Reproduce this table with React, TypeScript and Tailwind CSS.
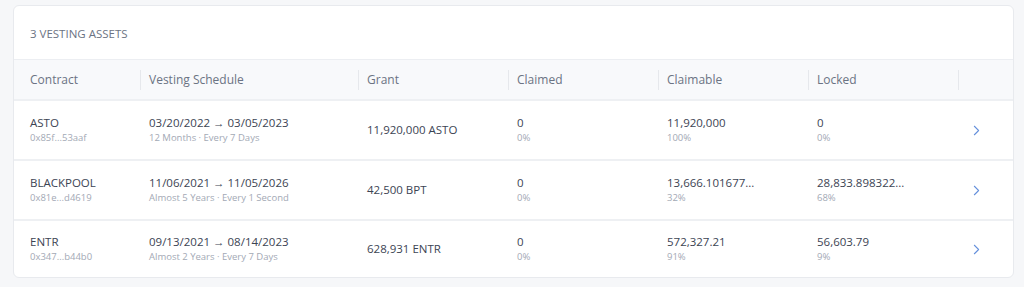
import React from "react";
import { ChevronRight } from "lucide-react";

interface Asset {
  name: string;
  address: string;
  start: string;
  end: string;
  schedule: string;
  grant: string;
  claimed: string;
  claimedPct: string;
  claimable: string;
  claimablePct: string;
  locked: string;
  lockedPct: string;
}

const assets: Asset[] = [
  {
    name: "ASTO",
    address: "0x85f...53aaf",
    start: "03/20/2022",
    end: "03/05/2023",
    schedule: "12 Months · Every 7 Days",
    grant: "11,920,000 ASTO",
    claimed: "0",
    claimedPct: "0%",
    claimable: "11,920,000",
    claimablePct: "100%",
    locked: "0",
    lockedPct: "0%",
  },
  {
    name: "BLACKPOOL",
    address: "0x81e...d4619",
    start: "11/06/2021",
    end: "11/05/2026",
    schedule: "Almost 5 Years · Every 1 Second",
    grant: "42,500 BPT",
    claimed: "0",
    claimedPct: "0%",
    claimable: "13,666.101677...",
    claimablePct: "32%",
    locked: "28,833.898322...",
    lockedPct: "68%",
  },
  {
    name: "ENTR",
    address: "0x347...b44b0",
    start: "09/13/2021",
    end: "08/14/2023",
    schedule: "Almost 2 Years · Every 7 Days",
    grant: "628,931 ENTR",
    claimed: "0",
    claimedPct: "0%",
    claimable: "572,327.21",
    claimablePct: "91%",
    locked: "56,603.79",
    lockedPct: "9%",
  },
];

const columns = [
  { label: "Contract", width: "w-[126px]" },
  { label: "Vesting Schedule", width: "w-[218px]" },
  { label: "Grant", width: "w-[150px]" },
  { label: "Claimed", width: "w-[150px]" },
  { label: "Claimable", width: "w-[150px]" },
  { label: "Locked", width: "w-[150px]" },
  { label: "", width: "w-[57px]" },
];

const Stacked = ({ top, bottom }: { top: string; bottom: string }) => (
  <div className="flex flex-col">
    <span className="text-[11.5px] leading-4 text-[#3c4453]">{top}</span>
    <span className="text-[9.5px] leading-[14px] text-[#a3a9b5]">{bottom}</span>
  </div>
);

const App = () => {
  return (
    <div
      className="min-h-[287px] bg-[#f6f7f9] pl-[13px] pr-[10px] pt-[5px]"
      style={{ fontFamily: "'Open Sans', 'Noto Sans', sans-serif" }}
    >
      <div className="overflow-hidden rounded-md border border-[#e8eaee] bg-white">
        {/* Card header */}
        <div className="flex h-[54px] items-center border-b border-[#eceef2] pl-[16px] pt-[2px]">
          <h2 className="text-[11.5px] uppercase text-[#6b7383]">3 Vesting Assets</h2>
        </div>

        <table className="w-full table-fixed border-collapse">
          <thead>
            <tr className="h-[40px] bg-[#f8f9fb]">
              {columns.map((col, i) => (
                <th key={i} className={`${col.width} p-0 text-left font-normal`}>
                  <div className={`flex h-[20px] items-center ${i === 0 ? "pl-[16px]" : ""}`}>
                    {i > 0 && <div className="h-[20px] w-px bg-[#e6e8ec]" />}
                    <span className={`text-[12px] leading-[20px] text-[#6b7383] ${i > 0 ? "ml-[8px]" : ""}`}>
                      {col.label}
                    </span>
                  </div>
                </th>
              ))}
            </tr>
          </thead>
          <tbody>
            {assets.map((a, i) => (
              <tr
                key={a.name}
                className={`border-t-2 border-[#eef0f3] ${i === assets.length - 1 ? "h-[57px]" : "h-[60px]"}`}
              >
                <td className="pl-[16px]">
                  <Stacked top={a.name} bottom={a.address} />
                </td>
                <td className="pl-[9px]">
                  <Stacked top={`${a.start} → ${a.end}`} bottom={a.schedule} />
                </td>
                <td className="pl-[9px] text-[11.5px] text-[#3c4453]">{a.grant}</td>
                <td className="pl-[9px]">
                  <Stacked top={a.claimed} bottom={a.claimedPct} />
                </td>
                <td className="pl-[9px]">
                  <Stacked top={a.claimable} bottom={a.claimablePct} />
                </td>
                <td className="pl-[9px]">
                  <Stacked top={a.locked} bottom={a.lockedPct} />
                </td>
                <td className="pl-[10px]">
                  <ChevronRight size={17} strokeWidth={1.5} className="text-[#6792dc]" />
                </td>
              </tr>
            ))}
          </tbody>
        </table>
      </div>
    </div>
  );
};

export default App;
